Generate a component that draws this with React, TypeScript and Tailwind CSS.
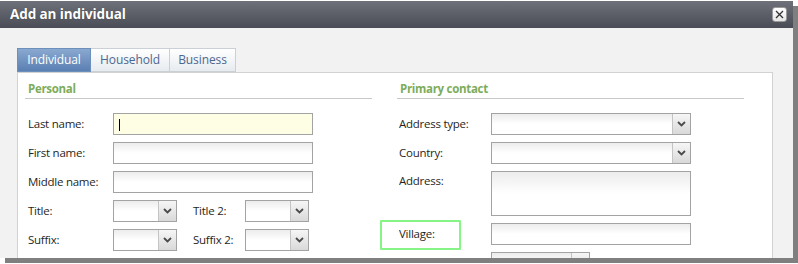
import React from "react";

const font = { fontFamily: '"Open Sans", "Noto Sans", Arial, sans-serif' };

function Chevron() {
  return (
    <svg width="9" height="6" viewBox="0 0 9 6">
      <path d="M1 1 L4.5 4.5 L8 1" fill="none" stroke="#4a4a4a" strokeWidth="1.8" />
    </svg>
  );
}

function Input({ w, h = 22, yellow = false, cursor = false }: { w: number; h?: number; yellow?: boolean; cursor?: boolean }) {
  return (
    <div
      className={`relative shrink-0 border border-[#a3a3a3] ${yellow ? "bg-[#fefee4]" : "bg-gradient-to-b from-[#ececec] via-white to-white"}`}
      style={{ width: w, height: h }}
    >
      {cursor && <div className="absolute left-[5px] top-[5px] h-[12px] w-[1px] bg-black" />}
    </div>
  );
}

function Select({ w, btn = 18 }: { w: number; btn?: number }) {
  return (
    <div className="flex shrink-0 h-[22px] border border-[#a3a3a3] bg-gradient-to-b from-[#ececec] via-white to-white" style={{ width: w }}>
      <div className="flex-1" />
      <div
        className="flex items-center justify-center border-l border-[#c4c4c4] bg-gradient-to-b from-[#f6f6f6] to-[#d9d9d9]"
        style={{ width: btn }}
      >
        <Chevron />
      </div>
    </div>
  );
}

function Label({ children, w }: { children: React.ReactNode; w: number }) {
  return (
    <div className="shrink-0 text-[11.5px] tracking-[-0.25px] text-[#1f1f24] leading-none" style={{ width: w }}>
      {children}
    </div>
  );
}

export default function App() {
  return (
    <div className="h-[264px] w-[798px] overflow-hidden bg-white pt-[1px]" style={font}>
      <div className="relative flex h-[257px] w-[793px] flex-col overflow-hidden bg-[#f2f2f2] shadow-[5px_5px_0_0_#7f7f7f]">
        {/* Title bar */}
        <div className="flex h-[27px] shrink-0 items-center justify-between bg-gradient-to-b from-[#6e7179] to-[#4a4d55] pl-[10px] pr-[6px]">
          <div className="text-[13.5px] font-bold tracking-[-0.1px] text-white leading-none" style={{ textShadow: "0 0 1px rgba(0,0,0,0.4)" }}>
            Add an individual
          </div>
          <div className="flex h-[15px] w-[15px] items-center justify-center rounded-[3px] border border-[#9a9a9a] bg-gradient-to-b from-white to-[#e6e6e6]">
            <svg width="9" height="9" viewBox="0 0 9 9">
              <path d="M1 1 L8 8 M8 1 L1 8" stroke="#333" strokeWidth="1.3" />
            </svg>
          </div>
        </div>

        {/* Body */}
        <div className="flex flex-1 flex-col pl-[17px] pr-[20px] pt-[20px]">
          {/* Tabs */}
          <div className="flex h-[24px] shrink-0 text-[12px] tracking-[-0.1px] leading-none">
            <div className="flex w-[74px] items-center justify-center border border-[#6d8fbb] bg-gradient-to-b from-[#8aa9d0] to-[#5a7fb2] text-white">
              Individual
            </div>
            <div className="flex w-[79px] items-center justify-center border border-l-0 border-[#cbd0d6] bg-gradient-to-b from-white to-[#e7ebef] text-[#4c6890]">
              Household
            </div>
            <div className="flex w-[66px] items-center justify-center border border-l-0 border-[#cbd0d6] bg-gradient-to-b from-white to-[#e7ebef] text-[#4c6890]">
              Business
            </div>
          </div>

          {/* Panel */}
          <div className="flex flex-1 gap-[25px] border border-[#d2d2d2] bg-white pl-[7px] pt-[7px]">
            {/* Left column */}
            <div className="flex w-[347px] flex-col">
              <div className="flex h-[19px] items-center border-b border-[#c8c8c8] pl-[3px] text-[11.5px] tracking-[-0.3px] font-bold text-[#7dac5c] leading-none">
                Personal
              </div>
              <div className="flex flex-col gap-[7px] pl-[3px] pt-[14px]">
                <div className="flex items-center">
                  <Label w={85}>Last name:</Label>
                  <Input w={200} yellow cursor />
                </div>
                <div className="flex items-center">
                  <Label w={85}>First name:</Label>
                  <Input w={200} />
                </div>
                <div className="flex items-center">
                  <Label w={85}>Middle name:</Label>
                  <Input w={200} />
                </div>
                <div className="flex items-center">
                  <Label w={85}>Title:</Label>
                  <Select w={64} />
                  <div className="w-[16px]" />
                  <Label w={52}>Title 2:</Label>
                  <Select w={64} />
                </div>
                <div className="flex items-center">
                  <Label w={85}>Suffix:</Label>
                  <Select w={64} />
                  <div className="w-[16px]" />
                  <Label w={52}>Suffix 2:</Label>
                  <Select w={64} />
                </div>
                <div className="flex items-center">
                  <Label w={85}>&nbsp;</Label>
                  <Input w={200} />
                </div>
              </div>
            </div>

            {/* Right column */}
            <div className="relative flex w-[347px] flex-col">
              <div className="flex h-[19px] items-center border-b border-[#c8c8c8] pl-[3px] text-[11.5px] tracking-[-0.3px] font-bold text-[#7dac5c] leading-none">
                Primary contact
              </div>
              <div className="flex flex-col gap-[7px] pl-[2px] pt-[14px]">
                <div className="flex items-center">
                  <Label w={92}>Address type:</Label>
                  <Select w={200} />
                </div>
                <div className="flex items-center">
                  <Label w={92}>Country:</Label>
                  <Select w={200} />
                </div>
                <div className="flex items-start">
                  <div className="pt-[4px]">
                    <Label w={92}>Address:</Label>
                  </div>
                  <Input w={200} h={45} />
                </div>
                <div className="flex items-center">
                  <Label w={92}>Village:</Label>
                  <Input w={200} />
                </div>
                <div className="flex items-center">
                  <Label w={92}>State:</Label>
                  <Select w={99} />
                </div>
              </div>
              {/* highlight annotation */}
              <div className="absolute left-[-17px] top-[140px] h-[30px] w-[81px] rounded-[1px] border-2 border-[#86f486]" />
            </div>
          </div>
        </div>
      </div>
    </div>
  );
}
